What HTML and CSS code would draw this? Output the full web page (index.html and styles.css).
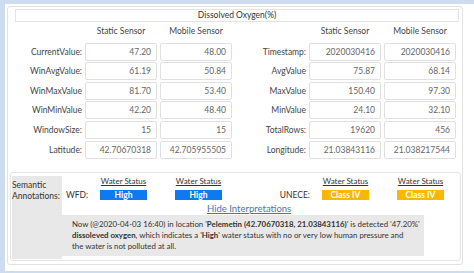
FILE: index.html
```html
<html>
<head>
<meta name="viewport" content="width=device-width, initial-scale=1">
<title>Dissolved Oxygen</title>
<link rel="stylesheet" href="styles.css">
</head>
<body>
<div class="frame">
  <div class="panel">
    <div class="sensors">
      <div class="title">Dissolved Oxygen(%)</div>
      <div class="grid">
        <span></span><span class="colhead">Static Sensor</span><span class="colhead">Mobile Sensor</span>
        <span></span><span class="colhead">Static Sensor</span><span class="colhead">Mobile Sensor</span>

        <span class="label">CurrentValue:</span><span class="field">47.20</span><span class="field">48.00</span>
        <span class="label">Timestamp:</span><span class="field">2020030416</span><span class="field">2020030416</span>

        <span class="label">WinAvgValue:</span><span class="field">61.19</span><span class="field">50.84</span>
        <span class="label">AvgValue</span><span class="field">75.87</span><span class="field">68.14</span>

        <span class="label">WinMaxValue</span><span class="field">81.70</span><span class="field">53.40</span>
        <span class="label">MaxValue</span><span class="field">150.40</span><span class="field">97.30</span>

        <span class="label">WinMinValue</span><span class="field">42.20</span><span class="field">48.40</span>
        <span class="label">MinValue</span><span class="field">24.10</span><span class="field">32.10</span>

        <span class="label">WindowSize:</span><span class="field">15</span><span class="field">15</span>
        <span class="label">TotalRows:</span><span class="field">19620</span><span class="field">456</span>

        <span class="label">Latitude:</span><span class="field">42.70670318</span><span class="field">42.705955505</span>
        <span class="label">Longitude:</span><span class="field">21.03843116</span><span class="field">21.038217544</span>
      </div>
    </div>

    <div class="semantic">
      <div class="sem-label">Semantic<br>Annotations:</div>
      <div class="sem-body">
        <div class="status-row">
          <span class="std std-wfd">WFD:</span>
          <div class="status status-1"><a href="#">Water Status</a><span class="badge high">High</span></div>
          <div class="status status-2"><a href="#">Water Status</a><span class="badge high">High</span></div>
          <span class="std std-unece">UNECE:</span>
          <div class="status status-3"><a href="#">Water Status</a><span class="badge class4">Class IV</span></div>
          <div class="status status-4"><a href="#">Water Status</a><span class="badge class4">Class IV</span></div>
        </div>
        <a class="toggle" href="#">Hide Interpretations</a>
        <div class="interp">
          Now (@2020-04-03 16:40) in location '<b>Pelemetin (42.70670318, 21.03843116)</b>' is detected '47.20%'<br>
          <b>dissoleved oxygen</b>, which indicates a '<b>High</b>' water status with no or very low human pressure and<br>
          the water is not polluted at all.
        </div>
      </div>
    </div>
  </div>
</div>
</body>
</html>
```

FILE: styles.css
```css
body {
    margin: 0;
    padding: 0;
    background: #fff;
    font-family: Lato, "Open Sans", sans-serif;
    color: #444;
}
.frame {
    width: 469px;
    height: 262px;
    padding: 2px 0 3px 2px;
    border-left: 5px solid #cddcee;
    border-top: 4px solid #cddcee;
    border-bottom: 7px solid #cddcee;
    background: #fff;
}
.panel {
    width: 452px;
    height: 255px;
    border: 1px solid #e4e2de;
    border-radius: 3px;
    padding: 2px 0 0 2px;
}
.sensors {
    margin: 0 3px 0 5px;
}
.title {
    height: 11px;
    border: 1px solid #e4e4e4;
    text-align: center;
    font-size: 8.5px;
    line-height: 11px;
    color: #333;
}
.grid {
    display: grid;
    grid-template-columns: 67px 72px 72px 71px 72px 72px;
    grid-template-rows: 19px;
    grid-auto-rows: 18px;
    column-gap: 3px;
    row-gap: 1.6px;
}
.colhead {
    text-align: center;
    font-size: 8.5px;
    line-height: 18px;
    color: #444;
}
.label {
    text-align: right;
    font-size: 8.5px;
    line-height: 18px;
    color: #444;
}
.field {
    border: 1px solid #e0e0e0;
    border-radius: 2px;
    text-align: right;
    padding-right: 5px;
    font-size: 8.5px;
    line-height: 16px;
    color: #666;
}

.semantic {
    display: flex;
    width: 446px;
    height: 83px;
    margin-top: 13px;
    border: 1px solid #e4e4e4;
    border-radius: 3px;
    padding: 3px 2px 1px 1px;
}
.sem-label {
    width: 50px;
    flex: none;
    background: #e8e8e8;
    padding-top: 4px;
    font-size: 8.5px;
    line-height: 11px;
    color: #333;
}
.sem-body {
    flex: 1;
}
.status-row {
    display: flex;
    align-items: flex-end;
    height: 24px;
}
.std {
    font-size: 8.5px;
    line-height: 10px;
    color: #333;
}
.std-wfd {
    margin-left: 4px;
    width: 34px;
}
.std-unece {
    width: 81px;
    text-align: right;
    padding-right: 12px;
    margin-left: 7px;
}
.status {
    display: flex;
    flex-direction: column;
    align-items: center;
    width: 47px;
}
.status-2, .status-4 {
    margin-left: 28px;
}
.status a {
    font-size: 8px;
    line-height: 11px;
    color: #333;
    margin-bottom: 3px;
}
.badge {
    width: 100%;
    height: 10px;
    text-align: center;
    font-size: 8.5px;
    line-height: 10px;
    font-weight: bold;
    color: #fff;
}
.high {
    background: #0f79f0;
}
.class4 {
    background: #f9b800;
}
.toggle {
    display: block;
    margin-top: 2px;
    padding-left: 145px;
    font-size: 9.5px;
    line-height: 13px;
    color: #4a74b8;
}
.interp {
    width: 350px;
    height: 34px;
    background: #e8e8e8;
    padding: 4px 2px 3px 10px;
    font-size: 7.85px;
    line-height: 11px;
    white-space: nowrap;
    overflow: hidden;
    color: #333;
}
```
